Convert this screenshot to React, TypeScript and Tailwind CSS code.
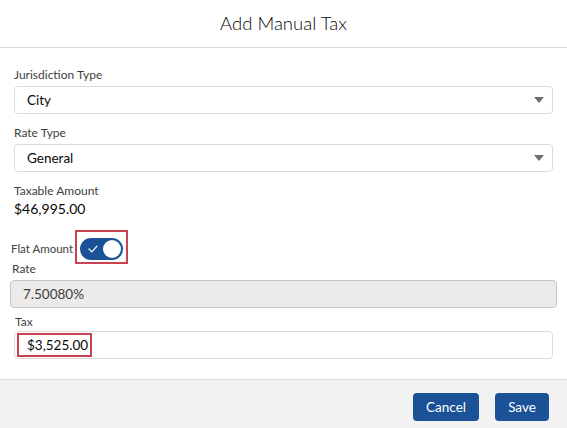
import React from "react";

const font = { fontFamily: "Lato, 'Open Sans', Arial, sans-serif" };

function Caret() {
  return (
    <svg width="10" height="6" viewBox="0 0 10 6" className="shrink-0">
      <path d="M0 0 H10 L5 6 Z" fill="#706e6b" />
    </svg>
  );
}

function SelectField({ label, value, top }: { label: string; value: string; top: string }) {
  return (
    <div className={top}>
      <div className="text-[12px] leading-4 text-[#3e3e3c]">{label}</div>
      <div className="mt-[3px] flex h-[28px] items-center justify-between rounded-[4px] border border-[#dddbda] bg-white pl-[12px] pr-[8px]">
        <span className="text-[13.5px] text-[#080707]">{value}</span>
        <Caret />
      </div>
    </div>
  );
}

export default function App() {
  return (
    <div className="flex h-[428px] w-[567px] flex-col bg-white" style={font}>
      <div className="flex h-[48px] shrink-0 items-center justify-center border-b border-[#dddbda]">
        <h1 className="text-[18.5px] font-light text-[#080707]">Add Manual Tax</h1>
      </div>
      <div className="flex-1 pt-[19px]">
        <div className="px-[14px]">
          <SelectField label="Jurisdiction Type" value="City" top="" />
          <SelectField label="Rate Type" value="General" top="mt-[11px]" />
          <div className="mt-[11px]">
            <div className="text-[12px] leading-4 text-[#3e3e3c]">Taxable Amount</div>
            <div className="text-[14px] leading-5 text-[#080707]">$46,995.00</div>
          </div>
        </div>
        <div className="mt-[11px] flex items-center pl-[11px] pr-[10px]">
          <span className="mt-[4px] text-[11.5px] leading-4 text-[#3e3e3c]">Flat Amount</span>
          <div className="ml-[2px] flex h-[34px] w-[53px] items-start justify-center border-2 border-[#c94453] pt-[6px]">
            <div className="flex h-[22px] w-[43px] items-center justify-between rounded-full bg-[#1b5297] pl-[8px] pr-[2px]">
              <svg width="10" height="8" viewBox="0 0 10 8">
                <path d="M1 4 L3.8 6.8 L9 1.2" fill="none" stroke="white" strokeWidth="1.2" strokeLinecap="round" strokeLinejoin="round" />
              </svg>
              <div className="h-[18px] w-[18px] rounded-full bg-white" />
            </div>
          </div>
        </div>
        <div className="px-[10px]">
          <div className="mt-[-3px] pl-[2px] text-[12px] leading-4 text-[#3e3e3c]">Rate</div>
          <div className="mt-[3px] flex h-[28px] items-center rounded-[4px] border border-[#c9c7c5] bg-[#ecebea] pl-[12px]">
            <span className="text-[13.5px] text-[#3e3e3c]">7.50080%</span>
          </div>
        </div>
        <div className="px-[14px]">
          <div className="mt-[6px] pl-[1px] text-[12px] leading-4 text-[#3e3e3c]">Tax</div>
          <div className="mt-[1px] flex h-[28px] items-center rounded-[4px] border border-[#dddbda] bg-white pl-[2px]">
            <div className="flex h-[24px] w-[75px] items-center border-2 border-[#c94453] pl-[8px]">
              <span className="text-[13.5px] text-[#080707]">$3,525.00</span>
            </div>
          </div>
        </div>
      </div>
      <div className="flex h-[49px] shrink-0 items-start justify-end gap-[16px] border-t border-[#dddbda] bg-[#f3f2f2] pr-[18px] pt-[13px]">
        <button className="flex h-[28px] w-[66px] items-center justify-center rounded-[4px] bg-[#1b5297] text-[13.5px] text-white">
          Cancel
        </button>
        <button className="flex h-[28px] w-[54px] items-center justify-center rounded-[4px] bg-[#1b5297] text-[13.5px] text-white">
          Save
        </button>
      </div>
    </div>
  );
}
